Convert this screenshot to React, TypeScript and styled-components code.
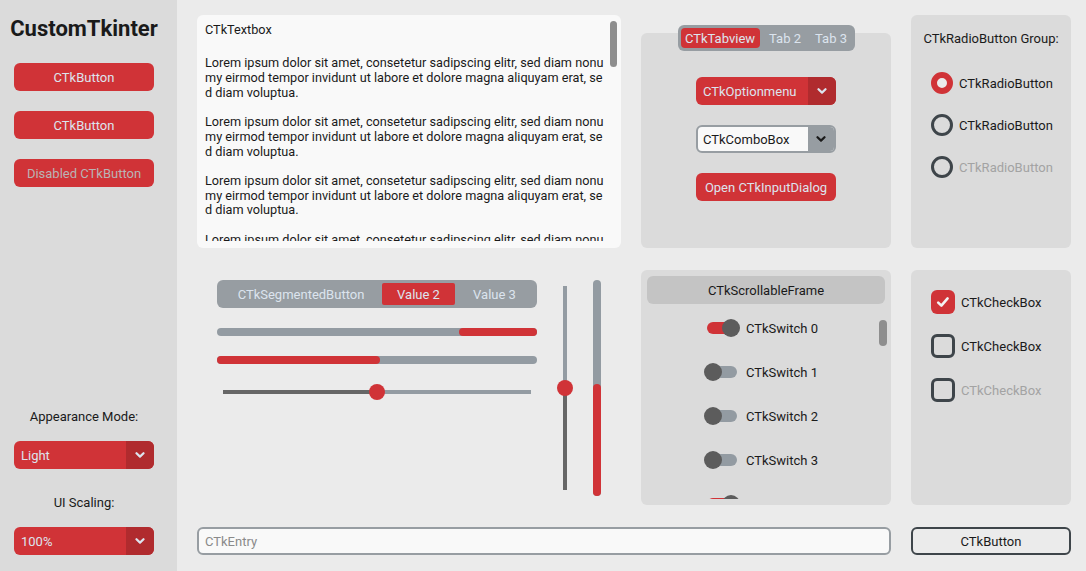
import React from 'react';
import styled, { createGlobalStyle } from 'styled-components';

const RED = '#d03337';
const RED_DARK = '#b02b2e';
const GRAY = '#979da2';
const TRACK = '#939ba2';
const SLIDER_DARK = '#666666';
const TEXT = '#1a1a1a';
const LIGHT_TEXT = '#dce4ee';
const DARK_BORDER = '#3e454a';
const FRAME = '#dbdbdb';

const GlobalStyle = createGlobalStyle`
  * { box-sizing: border-box; }
  body {
    margin: 0;
    background: #ebebeb;
    font-family: Roboto, 'Liberation Sans', sans-serif;
    font-size: 13px;
    color: ${TEXT};
  }
`;

const PARAGRAPH = [
  'Lorem ipsum dolor sit amet, consetetur sadipscing elitr, sed diam nonu',
  'my eirmod tempor invidunt ut labore et dolore magna aliquyam erat, se',
  'd diam voluptua.',
];

const Chevron = ({ color }: { color: string }) => (
  <svg width="10" height="6" viewBox="0 0 10 6">
    <path d="M1.5 1.2 L5 4.6 L8.5 1.2" fill="none" stroke={color} strokeWidth="2.2" strokeLinecap="round" strokeLinejoin="round" />
  </svg>
);

const OptionMenu = ({ label }: { label: string }) => (
  <MenuBox>
    <MenuLabel>{label}</MenuLabel>
    <MenuArrow>
      <Chevron color={LIGHT_TEXT} />
    </MenuArrow>
  </MenuBox>
);

const App = () => {
  return (
    <Window>
      <GlobalStyle />
      <Sidebar>
        <Title>CustomTkinter</Title>
        <SideButton>CTkButton</SideButton>
        <SideButton>CTkButton</SideButton>
        <SideButton disabled>Disabled CTkButton</SideButton>
        <Spacer />
        <SideLabel>Appearance Mode:</SideLabel>
        <OptionMenu label="Light" />
        <SideLabel $top={26}>UI Scaling:</SideLabel>
        <OptionMenu label="100%" />
      </Sidebar>

      <Main>
        <Textbox>
          <TextArea>
            <TextLine>CTkTextbox</TextLine>
            <TextLine>{' '}</TextLine>
            {Array.from({ length: 4 }).map((_, i) => (
              <Paragraph key={i} $first={i === 0}>
                {(i === 3 ? PARAGRAPH.slice(0, 1) : PARAGRAPH).map(line => (
                  <TextLine key={line}>{line}</TextLine>
                ))}
                <TextLine>{' '}</TextLine>
              </Paragraph>
            ))}
          </TextArea>
          <TextScroll />
        </Textbox>

        <TabCell>
          <TabBar>
            <Tab $active>CTkTabview</Tab>
            <Tab>Tab 2</Tab>
            <Tab>Tab 3</Tab>
          </TabBar>
          <TabFrame>
            <OptionMenu label="CTkOptionmenu" />
            <Combo>
              <ComboText>CTkComboBox</ComboText>
              <ComboArrow>
                <Chevron color="#1a1a1a" />
              </ComboArrow>
            </Combo>
            <RedButton>Open CTkInputDialog</RedButton>
          </TabFrame>
        </TabCell>

        <Frame>
          <GroupLabel>CTkRadioButton Group:</GroupLabel>
          <RadioList>
            <ChoiceRow>
              <Radio $checked />
              <span>CTkRadioButton</span>
            </ChoiceRow>
            <ChoiceRow>
              <Radio />
              <span>CTkRadioButton</span>
            </ChoiceRow>
            <ChoiceRow $disabled>
              <Radio />
              <span>CTkRadioButton</span>
            </ChoiceRow>
          </RadioList>
        </Frame>

        <SlidersArea>
          <SliderColumn>
            <Segmented>
              <Segment>CTkSegmentedButton</Segment>
              <Segment $active>Value 2</Segment>
              <Segment>Value 3</Segment>
            </Segmented>
            <ProgressBar>
              <ProgressFill $from={0.756} $to={1} />
            </ProgressBar>
            <ProgressBar>
              <ProgressFill $from={0} $to={0.51} />
            </ProgressBar>
            <HSlider>
              <HTrack $value={0.5} />
              <Knob style={{ left: `calc(6px + ${0.5} * (100% - 12px) - 8px)`, top: 0 }} />
            </HSlider>
          </SliderColumn>
          <VSlider>
            <VTrack $value={0.5} />
            <Knob style={{ top: `calc(6px + ${0.5} * (100% - 12px) - 8px)`, left: 0 }} />
          </VSlider>
          <VProgress>
            <VProgressFill $value={0.52} />
          </VProgress>
        </SlidersArea>

        <ScrollFrame>
          <FrameLabel>CTkScrollableFrame</FrameLabel>
          <SwitchList>
            {[0, 1, 2, 3, 4].map(i => (
              <SwitchRow key={i}>
                <Switch $on={i === 0 || i === 4}>
                  <SwitchKnob />
                </Switch>
                <span>CTkSwitch {i}</span>
              </SwitchRow>
            ))}
          </SwitchList>
          <FrameScroll />
        </ScrollFrame>

        <CheckFrame>
          <ChoiceRow>
            <CheckBox $checked>
              <svg width="16" height="16" viewBox="0 0 16 16">
                <path d="M3.2 8.6 L6.4 11.6 L12.6 4.4" fill="none" stroke="#f2f2f2" strokeWidth="2.6" strokeLinecap="round" strokeLinejoin="round" />
              </svg>
            </CheckBox>
            <span>CTkCheckBox</span>
          </ChoiceRow>
          <ChoiceRow>
            <CheckBox />
            <span>CTkCheckBox</span>
          </ChoiceRow>
          <ChoiceRow $disabled>
            <CheckBox />
            <span>CTkCheckBox</span>
          </ChoiceRow>
        </CheckFrame>

        <Entry placeholder="CTkEntry" />
        <OutlineButton>CTkButton</OutlineButton>
      </Main>
    </Window>
  );
};

export default App;

const Window = styled.div`
  width: 1086px;
  height: 571px;
  display: grid;
  grid-template-columns: 177px 1fr;
  background: #ebebeb;
  overflow: hidden;
`;

const Sidebar = styled.div`
  background: ${FRAME};
  display: flex;
  flex-direction: column;
  align-items: center;
  padding: 17px 23px 16px 14px;
`;

const Title = styled.div`
  font-size: 22px;
  font-weight: 700;
  line-height: 24px;
  margin-bottom: 22px;
  white-space: nowrap;
  color: ${TEXT};
`;

const SideButton = styled.button`
  width: 140px;
  height: 28px;
  flex-shrink: 0;
  border: none;
  border-radius: 6px;
  background: ${RED};
  color: ${props => (props.disabled ? '#b9b3b5' : LIGHT_TEXT)};
  font-family: Roboto, sans-serif;
  font-size: 13px;
  margin-bottom: 20px;
  padding: 0;
`;

const Spacer = styled.div`
  flex: 1;
`;

const SideLabel = styled.div<{ $top?: number }>`
  line-height: 16px;
  margin-top: ${props => props.$top ?? 0}px;
  margin-bottom: 16px;
  font-size: 13px;
`;

const MenuBox = styled.div`
  width: 140px;
  height: 28px;
  flex-shrink: 0;
  border-radius: 6px;
  overflow: hidden;
  display: flex;
  background: ${RED};
  color: ${LIGHT_TEXT};
`;

const MenuLabel = styled.div`
  flex: 1;
  display: flex;
  align-items: center;
  padding-left: 7px;
  font-size: 13px;
`;

const MenuArrow = styled.div`
  width: 28px;
  background: ${RED_DARK};
  display: flex;
  align-items: center;
  justify-content: center;
`;

const Main = styled.div`
  display: grid;
  grid-template-columns: 424px 250px 160px;
  grid-template-rows: 233px 235px 28px;
  column-gap: 20px;
  row-gap: 22px;
  padding: 15px 15px 16px 20px;
`;

const Textbox = styled.div`
  position: relative;
  background: #f9f9f9;
  border-radius: 6px;
  padding: 8px 8px 7px;
  display: flex;
  flex-direction: column;
`;

const TextArea = styled.div`
  flex: 1;
  min-height: 0;
  overflow: hidden;
`;

const Paragraph = styled.div<{ $first?: boolean }>`
  margin-top: ${props => (props.$first ? 4 : 0)}px;
`;

const TextLine = styled.div`
  white-space: pre;
  font-size: 12.7px;
  line-height: 14.7px;
  height: 14.7px;
  color: ${TEXT};
`;

const TextScroll = styled.div`
  position: absolute;
  right: 4px;
  top: 6px;
  width: 7px;
  height: 46px;
  border-radius: 4px;
  background: #8e8e8e;
`;

const TabCell = styled.div`
  display: flex;
  flex-direction: column;
  align-items: center;
`;

const TabBar = styled.div`
  position: relative;
  z-index: 1;
  margin-top: 10px;
  height: 26px;
  background: ${GRAY};
  border-radius: 6px;
  padding: 3px;
  display: grid;
  grid-template-columns: 79px 51px 41px;
`;

const Tab = styled.div<{ $active?: boolean }>`
  display: flex;
  align-items: center;
  justify-content: center;
  border-radius: 4px;
  font-size: 13px;
  color: ${LIGHT_TEXT};
  background: ${props => (props.$active ? RED : 'transparent')};
`;

const TabFrame = styled.div`
  align-self: stretch;
  flex: 1;
  margin-top: -18px;
  background: ${FRAME};
  border-radius: 6px;
  padding-top: 44px;
  display: flex;
  flex-direction: column;
  align-items: center;
  gap: 20px;
`;

const Combo = styled.div`
  width: 140px;
  height: 28px;
  border: 2px solid ${GRAY};
  border-radius: 6px;
  overflow: hidden;
  display: flex;
  background: #f9f9f9;
`;

const ComboText = styled.div`
  flex: 1;
  display: flex;
  align-items: center;
  padding-left: 5px;
  font-size: 13px;
  color: ${TEXT};
`;

const ComboArrow = styled.div`
  width: 26px;
  background: ${GRAY};
  display: flex;
  align-items: center;
  justify-content: center;
`;

const RedButton = styled.button`
  width: 140px;
  height: 28px;
  border: none;
  border-radius: 6px;
  background: ${RED};
  color: ${LIGHT_TEXT};
  font-family: Roboto, sans-serif;
  font-size: 13px;
  padding: 0;
`;

const Frame = styled.div`
  background: ${FRAME};
  border-radius: 6px;
  display: flex;
  flex-direction: column;
`;

const GroupLabel = styled.div`
  text-align: center;
  line-height: 16px;
  margin-top: 16px;
  font-size: 13px;
`;

const RadioList = styled.div`
  display: flex;
  flex-direction: column;
  gap: 20px;
  padding: 25px 0 0 20px;
`;

const ChoiceRow = styled.div<{ $disabled?: boolean }>`
  display: flex;
  align-items: center;
  gap: 6px;
  font-size: 13px;
  color: ${props => (props.$disabled ? '#a3a3a3' : TEXT)};
`;

const Radio = styled.div<{ $checked?: boolean }>`
  width: 22px;
  height: 22px;
  border-radius: 50%;
  border: ${props => (props.$checked ? `6px solid ${RED}` : `3px solid ${DARK_BORDER}`)};
  background: ${props => (props.$checked ? '#ebebeb' : 'transparent')};
`;

const SlidersArea = styled.div`
  display: flex;
  align-items: flex-start;
  padding: 10px 20px 9px 20px;
`;

const SliderColumn = styled.div`
  width: 320px;
  display: flex;
  flex-direction: column;
`;

const Segmented = styled.div`
  height: 28px;
  background: ${GRAY};
  border-radius: 6px;
  padding: 3px;
  display: grid;
  grid-template-columns: 162px 73px 1fr;
`;

const Segment = styled.div<{ $active?: boolean }>`
  display: flex;
  align-items: center;
  justify-content: center;
  border-radius: 2px;
  font-size: 13px;
  white-space: nowrap;
  color: ${LIGHT_TEXT};
  background: ${props => (props.$active ? RED : 'transparent')};
`;

const ProgressBar = styled.div`
  height: 8px;
  margin-top: 20px;
  border-radius: 4px;
  background: ${TRACK};
  display: flex;
`;

const ProgressFill = styled.div<{ $from: number; $to: number }>`
  margin-left: ${props => props.$from * 100}%;
  width: ${props => (props.$to - props.$from) * 100}%;
  border-radius: 4px;
  background: ${RED};
`;

const HSlider = styled.div`
  position: relative;
  height: 16px;
  margin-top: 20px;
  padding: 0 6px;
  display: flex;
  align-items: center;
`;

const HTrack = styled.div<{ $value: number }>`
  flex: 1;
  height: 4px;
  background: linear-gradient(
    to right,
    ${SLIDER_DARK} ${props => props.$value * 100}%,
    ${TRACK} ${props => props.$value * 100}%
  );
`;

const Knob = styled.div`
  position: absolute;
  width: 16px;
  height: 16px;
  border-radius: 50%;
  background: ${RED};
`;

const VSlider = styled.div`
  position: relative;
  width: 16px;
  height: 216px;
  margin-left: 20px;
  padding: 6px 0;
  display: flex;
  justify-content: center;
`;

const VTrack = styled.div<{ $value: number }>`
  width: 4px;
  background: linear-gradient(
    to bottom,
    ${TRACK} ${props => props.$value * 100}%,
    ${SLIDER_DARK} ${props => props.$value * 100}%
  );
`;

const VProgress = styled.div`
  width: 8px;
  height: 216px;
  margin-left: 20px;
  border-radius: 4px;
  background: ${TRACK};
  display: flex;
  flex-direction: column;
  justify-content: flex-end;
`;

const VProgressFill = styled.div<{ $value: number }>`
  height: ${props => props.$value * 100}%;
  border-radius: 4px;
  background: ${RED};
`;

const ScrollFrame = styled.div`
  position: relative;
  background: ${FRAME};
  border-radius: 6px;
  padding: 6px;
  display: flex;
  flex-direction: column;
  overflow: hidden;
`;

const FrameLabel = styled.div`
  height: 28px;
  flex-shrink: 0;
  border-radius: 6px;
  background: #c4c4c4;
  display: flex;
  align-items: center;
  justify-content: center;
  font-size: 13px;
`;

const SwitchList = styled.div`
  flex: 1;
  min-height: 0;
  overflow: hidden;
  display: flex;
  flex-direction: column;
  gap: 20px;
  padding: 12px 0 0 57px;
`;

const SwitchRow = styled.div`
  height: 24px;
  flex-shrink: 0;
  display: flex;
  align-items: center;
  gap: 6px;
  font-size: 13px;
`;

const Switch = styled.div<{ $on?: boolean }>`
  position: relative;
  width: 36px;
  height: 18px;
  display: flex;
  justify-content: ${props => (props.$on ? 'flex-end' : 'flex-start')};
  &::before {
    content: '';
    position: absolute;
    left: 3px;
    right: 3px;
    top: 3px;
    bottom: 3px;
    border-radius: 6px;
    background: ${props => (props.$on ? RED : TRACK)};
  }
`;

const SwitchKnob = styled.div`
  position: relative;
  width: 18px;
  height: 18px;
  border-radius: 50%;
  background: #5c5c5c;
`;

const FrameScroll = styled.div`
  position: absolute;
  right: 4px;
  top: 50px;
  width: 8px;
  height: 26px;
  border-radius: 4px;
  background: #8e8e8e;
`;

const CheckFrame = styled.div`
  background: ${FRAME};
  border-radius: 6px;
  padding: 20px 0 0 20px;
  display: flex;
  flex-direction: column;
  gap: 20px;
`;

const CheckBox = styled.div<{ $checked?: boolean }>`
  width: 24px;
  height: 24px;
  border-radius: 6px;
  display: flex;
  align-items: center;
  justify-content: center;
  background: ${props => (props.$checked ? RED : 'transparent')};
  border: ${props => (props.$checked ? 'none' : `3px solid ${DARK_BORDER}`)};
`;

const Entry = styled.input`
  grid-column: 1 / span 2;
  height: 28px;
  border: 2px solid ${GRAY};
  border-radius: 6px;
  background: #f9f9f9;
  padding: 0 6px;
  font-family: Roboto, sans-serif;
  font-size: 13px;
  outline: none;
  &::placeholder {
    color: #8a8a8a;
  }
`;

const OutlineButton = styled.button`
  height: 28px;
  border: 2px solid ${DARK_BORDER};
  border-radius: 6px;
  background: transparent;
  color: ${TEXT};
  font-family: Roboto, sans-serif;
  font-size: 13px;
  padding: 0;
`;
